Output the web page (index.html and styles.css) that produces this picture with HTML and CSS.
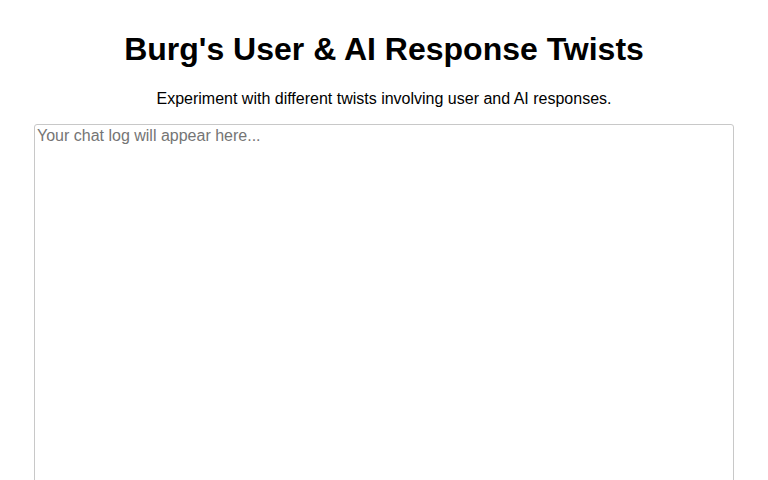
FILE: index.html
```html
<!DOCTYPE html>
<html lang="en">
<head>
<meta charset="utf-8">
<title>Burg's User &amp; AI Response Twists</title>
<link rel="stylesheet" href="styles.css">
</head>
<body>
<main class="page">
  <h1 class="title">Burg's User &amp; AI Response Twists</h1>
  <p class="subtitle">Experiment with different twists involving user and AI responses.</p>
  <textarea class="chat-log" placeholder="Your chat log will appear here..." readonly></textarea>
</main>
</body>
</html>
```
FILE: styles.css
```css
html, body {
  margin: 0;
  background: #fff;
}
body {
  padding: 10px 0 0;
  font-family: "Liberation Sans", Arial, sans-serif;
  color: #000;
}
.page {
  max-width: 700px;
  margin: 0 auto;
  text-align: center;
}
.title {
  font-size: 32px;
  font-weight: bold;
  margin: 21.44px 0;
}
.subtitle {
  font-size: 16px;
  margin: 16px 0;
}
.chat-log {
  display: block;
  box-sizing: border-box;
  width: 700px;
  height: 420px;
  margin: 0;
  padding: 2px;
  border: 1px solid #c8c8c8;
  border-radius: 3px;
  font-family: "Liberation Sans", Arial, sans-serif;
  font-size: 16px;
  resize: vertical;
  text-align: left;
}
.chat-log::placeholder {
  color: #757575;
}
```
